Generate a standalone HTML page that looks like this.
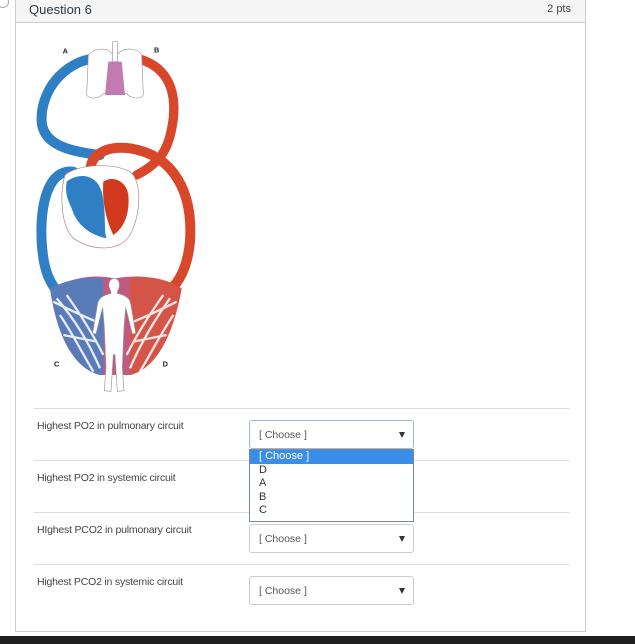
<!DOCTYPE html>
<html><head><meta charset="utf-8"><style>
*{margin:0;padding:0;box-sizing:border-box}
body{width:635px;height:644px;background:#fff;font-family:"Liberation Sans",sans-serif;position:relative;overflow:hidden}
.card{position:absolute;left:15px;top:-2px;width:571px;height:634px;border:1px solid #c7cdd1}
.hdr{position:absolute;left:15px;top:-2px;width:571px;height:25px;background:#f5f5f5;border:1px solid #c7cdd1}
.hdr .t{position:absolute;left:13px;top:3px;font-size:13px;color:#2d3b45}
.hdr .p{position:absolute;right:14px;top:4px;font-size:11px;color:#444}
.sep{position:absolute;left:34px;width:536px;height:1px;background:#dcdfe2}
.lbl{position:absolute;left:37px;font-size:10.5px;color:#444;letter-spacing:-0.2px}
.sel{position:absolute;left:249px;width:165px;height:29px;border:1px solid #c7cdd1;border-radius:3px;background:#fff;font-size:10.5px;color:#555;padding:8px 0 0 9px}
.sel:after{content:"";position:absolute;right:8px;top:11px;border-left:3px solid transparent;border-right:3px solid transparent;border-top:6px solid #333}
.dd{position:absolute;left:249px;top:449px;width:165px;height:73px;border:1px solid #7a8a9a;background:#fff;font-size:11px;color:#333}
.dd div{height:13.5px;line-height:13.5px;padding-left:9px}
.dd .h{background:#3b8ee8;color:#fff}
.bar{position:absolute;left:0;top:636px;width:635px;height:8px;background:#1e1e1e}
.circ{position:absolute;left:-3px;top:-4px;width:12px;height:12px;border:1px solid #aaa;border-radius:50%}
</style></head><body>
<div class="circ"></div>
<div class="card"></div>
<div class="hdr"><span class="t">Question 6</span><span class="p">2 pts</span></div>
<svg style="position:absolute;left:30px;top:35px" width="170" height="360" viewBox="0 0 510 1080">
<g font-family="Liberation Sans" font-weight="bold" font-size="22" fill="#222"><text x="98" y="55">A</text><text x="372" y="52">B</text><text x="72" y="995">C</text><text x="398" y="995">D</text></g>
<g fill="none" stroke-linecap="round">
<path d="M195,70 C100,80 30,170 35,260 C40,330 120,350 210,360" stroke="#2f7fc4" stroke-width="30"/>
<path d="M320,70 C400,90 440,150 430,250 C420,330 400,380 320,420" stroke="#d9472a" stroke-width="28"/>
<path d="M185,430 C165,360 230,330 300,340 C430,360 490,470 480,620 C470,720 430,770 380,790" stroke="#d9472a" stroke-width="30"/>
<path d="M130,410 C50,400 30,520 35,620 C40,710 60,750 100,790" stroke="#2f7fc4" stroke-width="30"/>
</g>
<path d="M60,760 C150,720 200,720 255,730 C320,720 380,720 455,760 C430,900 380,1000 300,1020 L210,1020 C130,1000 80,900 60,760Z" fill="#c05a80"/>
<path d="M60,760 C120,730 170,725 220,730 L220,1020 L210,1020 C130,1000 80,900 60,760Z" fill="#3f83c6" opacity=".8"/>
<path d="M300,730 C360,722 410,730 455,760 C430,900 380,1000 300,1020Z" fill="#d9533a" opacity=".8"/>
<g stroke="#fff" stroke-width="7" fill="none" opacity=".85">
<path d="M80,790 C140,860 180,930 210,1000 M110,780 C160,850 190,900 220,960 M90,840 C130,900 160,960 190,1010 M420,790 C370,860 330,930 300,1000 M400,780 C350,850 320,900 290,960 M430,840 C390,900 360,960 330,1010 M70,800 C110,820 150,840 200,860 M440,800 C400,820 360,840 310,860 M100,900 L200,920 M410,900 L310,920"/>
</g>
<path d="M255,730 c-15,0 -20,12 -18,25 c2,10 8,15 6,20 c-20,6 -35,10 -40,30 l-15,90 l10,2 l20,-80 l5,60 l5,120 l-5,70 l20,2 l7,-110 l5,0 l7,110 l20,-2 l-5,-70 l5,-120 l5,-60 l20,80 l10,-2 l-15,-90 c-5,-20 -20,-24 -40,-30 c-2,-5 4,-10 6,-20 c2,-13 -3,-25 -18,-25z" fill="#fff" stroke="#999" stroke-width="2"/>
<path d="M175,60 C190,40 230,35 245,55 L265,55 C285,35 325,40 335,60 L340,180 C330,195 300,190 290,175 L220,175 C210,190 180,195 170,180Z" fill="#fff" stroke="#999" stroke-width="2"/>
<path d="M248,20 L262,20 L262,80 L248,80Z" fill="#fff" stroke="#999" stroke-width="2"/>
<path d="M235,80 L275,80 L285,180 L225,180Z" fill="#c27ab0"/>
<path d="M105,420 C140,390 240,380 300,410 C330,430 340,520 300,600 C270,650 190,650 130,610 C90,570 90,470 105,420Z" fill="#fff" stroke="#b08080" stroke-width="2"/>
<path d="M110,440 C150,410 200,420 215,470 C230,530 220,590 230,610 C180,600 140,570 125,520 C110,490 105,470 110,440Z" fill="#2f7fc4"/>
<path d="M220,440 C250,420 290,440 295,480 C300,540 280,580 250,600 C230,560 215,500 220,440Z" fill="#d23a20"/>
</svg>
<div class="sep" style="top:408px"></div>
<div class="sep" style="top:460px"></div>
<div class="sep" style="top:512px"></div>
<div class="sep" style="top:564px"></div>
<div class="lbl" style="top:420px">Highest PO2 in pulmonary circuit</div>
<div class="lbl" style="top:472px">Highest PO2 in systemic circuit</div>
<div class="lbl" style="top:524px">HIghest PCO2 in pulmonary circuit</div>
<div class="lbl" style="top:576px">Highest PCO2 in systemic circuit</div>
<div class="sel" style="top:420px;border-color:#9fb8d6">[ Choose ]</div>
<div class="sel" style="top:524px">[ Choose ]</div>
<div class="sel" style="top:576px">[ Choose ]</div>
<div class="dd"><div class="h">[ Choose ]</div><div>D</div><div>A</div><div>B</div><div>C</div></div>
<div class="bar"></div>
</body></html>
